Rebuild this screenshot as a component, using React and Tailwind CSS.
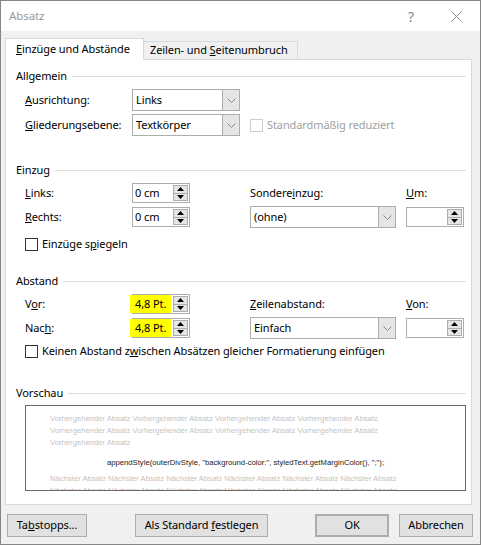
import React from 'react';

const Chevron = () => (
  <svg width="9" height="5" viewBox="0 0 9 5" fill="none">
    <path d="M0.5 0.5 L4.5 4.5 L8.5 0.5" stroke="#8a8a8a" strokeWidth="1" />
  </svg>
);

const Arrow = ({ up }) => (
  <svg width="7" height="4" viewBox="0 0 7 4">
    {up ? <path d="M0 4 L3.5 0 L7 4 Z" fill="#000" /> : <path d="M0 0 L3.5 4 L7 0 Z" fill="#000" />}
  </svg>
);

const Spin = ({ value, highlight }) => (
  <div className="w-[58px] h-[20px] border border-[#adadad] bg-white flex">
    <div className={`flex-1 flex items-center pl-[2px] ${highlight ? 'bg-[#ffff00] -ml-[3px] pl-[5px] mr-[2px]' : ''}`}>{value}</div>
    <div className="w-[16px] flex flex-col py-px pr-px">
      <div className="flex-1 bg-[#e5e5e5] border border-[#adadad] flex items-center justify-center"><Arrow up /></div>
      <div className="flex-1 bg-[#e5e5e5] border border-[#adadad] border-t-0 flex items-center justify-center"><Arrow /></div>
    </div>
  </div>
);

const Select = ({ value, w }) => (
  <div className={`${w} h-[22px] border border-[#adadad] bg-white flex`}>
    <div className="flex-1 flex items-center pl-[3px]">{value}</div>
    <div className="w-[17px] bg-[#e5e5e5] border-l border-[#adadad] flex items-center justify-center"><Chevron /></div>
  </div>
);

const Heading = ({ children, mt }) => (
  <div className={`flex items-center h-[16px] pr-[5px] ${mt}`}>
    <span>{children}</span>
    <div className="flex-1 h-px bg-[#dcdcdc] ml-[5px]" />
  </div>
);

const Check = ({ children, disabled }) => (
  <div className="flex items-center h-[16px]">
    <div className={`w-[13px] h-[13px] border bg-white ${disabled ? 'border-[#cccccc]' : 'border-[#333]'}`} />
    <span className={`ml-[4px] ${disabled ? 'text-[#a0a0a0]' : ''}`}>{children}</span>
  </div>
);

const Btn = ({ children, cls }) => (
  <div className={`h-[23px] bg-[#e1e1e1] border border-[#adadad] flex items-center justify-center ${cls}`}>{children}</div>
);

const prev = 'Vorhergehender Absatz ';
const next = 'Nächster Absatz ';

export default function App() {
  return (
    <div className="w-[481px] h-[545px] border border-[#858585] bg-[#f0f0f0] flex flex-col text-[11px] tracking-[-0.1px] text-black font-['Segoe_UI','Noto_Sans',sans-serif] whitespace-nowrap overflow-hidden">
      {/* Title bar */}
      <div className="h-[30px] bg-white flex items-center pl-[8px] shrink-0 text-[11.5px]">
        <span className="text-[#999]">Absatz</span>
        <span className="ml-auto text-[#888] text-[14px] w-[10px] text-center mr-[35px]">?</span>
        <svg width="11" height="11" viewBox="0 0 11 11" className="mr-[18px]">
          <path d="M0.5 0.5 L10.5 10.5 M10.5 0.5 L0.5 10.5" stroke="#888" strokeWidth="1" />
        </svg>
      </div>

      <div className="px-[4px] pt-[7px] flex flex-col">
        {/* Tabs */}
        <div className="flex items-end h-[21px]">
          <div className="relative z-10 w-[139px] h-[22px] -mb-px bg-white border border-b-0 border-[#d9d9d9] flex items-center pl-[10px]">
            <span><u>E</u>inzüge und Abstände</span>
          </div>
          <div className="w-[154px] h-[18px] border border-b-0 border-l-0 border-[#d9d9d9] flex items-center pl-[6px]">
            <span>Zeilen- und <u>S</u>eitenumbruch</span>
          </div>
        </div>

        {/* Panel */}
        <div className="w-[467px] h-[446px] bg-white border border-[#d9d9d9] pl-[10px] flex flex-col">
          <Heading mt="mt-[8px]">Allgemein</Heading>
          <div className="mt-[5px] ml-[9px] grid grid-cols-[107px_108px_10px_auto] grid-rows-[22px_22px] gap-y-[3px] items-center">
            <span><u>A</u>usrichtung:</span>
            <Select value="Links" w="w-[108px]" />
            <span />
            <span />
            <span><u>G</u>liederungsebene:</span>
            <Select value="Textkörper" w="w-[108px]" />
            <span />
            <Check disabled>Standardmäßig reduziert</Check>
          </div>

          <Heading mt="mt-[26px]">Einzug</Heading>
          <div className="mt-[4px] ml-[9px] grid grid-cols-[107px_58px_60px_146px_10px_58px] grid-rows-[22px_22px] gap-y-[2px] items-center">
            <span><u>L</u>inks:</span>
            <Spin value="0 cm" />
            <span />
            <span>Sondere<u>i</u>nzug:</span>
            <span />
            <span><u>U</u>m:</span>
            <span><u>R</u>echts:</span>
            <Spin value="0 cm" />
            <span />
            <Select value="(ohne)" w="w-[146px]" />
            <span />
            <Spin value="" />
          </div>
          <div className="mt-[8px] ml-[9px]">
            <Check>Einzüge s<u>p</u>iegeln</Check>
          </div>

          <Heading mt="mt-[21px]">Abstand</Heading>
          <div className="mt-[4px] ml-[9px] grid grid-cols-[107px_58px_60px_146px_10px_58px] grid-rows-[22px_22px] gap-y-[2px] items-center">
            <span>V<u>o</u>r:</span>
            <Spin value="4,8 Pt." highlight />
            <span />
            <span><u>Z</u>eilenabstand:</span>
            <span />
            <span><u>V</u>on:</span>
            <span>Nac<u>h</u>:</span>
            <Spin value="4,8 Pt." highlight />
            <span />
            <Select value="Einfach" w="w-[146px]" />
            <span />
            <Spin value="" />
          </div>
          <div className="mt-[4px] ml-[9px]">
            <Check>Keinen Abstand z<u>w</u>ischen Absätzen gleicher Formatierung einfügen</Check>
          </div>

          <Heading mt="mt-[26px]">Vorschau</Heading>
          <div className="mt-[4px] ml-[9px] w-[441px] h-[86px] border border-[#696969] overflow-hidden pt-[7px] font-['Liberation_Sans',Arial,sans-serif] text-[7.7px] tracking-normal leading-[12px]">
            <div className="pl-[24px] text-[#c4c4c4]">
              <div>{prev.repeat(4)}</div>
              <div>{prev.repeat(4)}</div>
              <div>Vorhergehender Absatz</div>
            </div>
            <div className="mt-[8px] text-center text-[#222]">appendStyle(outerDivStyle, "background-color:", styledText.getMarginColor(), ";");</div>
            <div className="mt-[4px] pl-[24px] text-[#c8c0c0]">
              <div>{next.repeat(6)}</div>
              <div className="h-[6px] overflow-hidden">{next.repeat(6)}</div>
            </div>
          </div>
        </div>

        {/* Buttons */}
        <div className="flex mt-[9px]">
          <Btn cls="ml-[2px] w-[80px]"><span>Ta<u>b</u>stopps...</span></Btn>
          <Btn cls="ml-[48px] w-[133px]"><span>Als Standard <u>f</u>estlegen</span></Btn>
          <Btn cls="ml-[47px] w-[74px] border-2 border-[#0078d7]">OK</Btn>
          <Btn cls="ml-[10px] w-[74px]">Abbrechen</Btn>
        </div>
      </div>
    </div>
  );
}
